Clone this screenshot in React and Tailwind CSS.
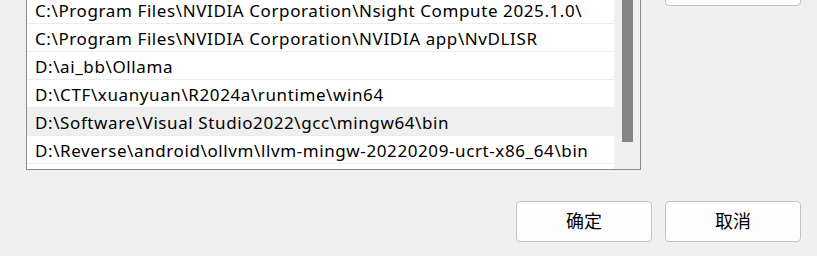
import React from 'react';

const paths = [
  'C:\\Program Files\\NVIDIA Corporation\\Nsight Compute 2025.1.0\\',
  'C:\\Program Files\\NVIDIA Corporation\\NVIDIA app\\NvDLISR',
  'D:\\ai_bb\\Ollama',
  'D:\\CTF\\xuanyuan\\R2024a\\runtime\\win64',
  'D:\\Software\\Visual Studio2022\\gcc\\mingw64\\bin',
  'D:\\Reverse\\android\\ollvm\\llvm-mingw-20220209-ucrt-x86_64\\bin',
];

const font = { fontFamily: '"Noto Sans", "Noto Sans CJK SC", sans-serif' };

export default function App() {
  return (
    <div
      className="w-[817px] h-[256px] bg-[#f0f0f0] overflow-hidden flex flex-col text-black"
      style={font}
    >
      {/* list + side buttons */}
      <div className="flex items-start pl-[26px] gap-[24px] -mt-[5px]">
        <div className="w-[615px] h-[175px] border border-[#8a8a8a] bg-white flex">
          <div className="w-[587px] flex flex-col">
            {paths.map((p, i) => (
              <div
                key={p}
                className={`h-[28px] shrink-0 border-b border-[#ececec] pl-[8px] pt-[2px] flex items-center text-[17px] tracking-[0.6px] leading-none whitespace-nowrap ${
                  i === 4 ? 'bg-[#efefef]' : ''
                }`}
              >
                {p}
              </div>
            ))}
          </div>
          <div className="w-[26px] bg-[#f0f0f0] pl-[8px]">
            <div className="w-[11px] h-[146px] bg-[#858585]" />
          </div>
        </div>
        <div className="-mt-[29px]">
          <button className="w-[136px] h-[40px] rounded-[4px] border border-[#c4c4c4] bg-[#fdfdfd]" />
        </div>
      </div>

      {/* dialog buttons */}
      <div className="flex justify-end gap-[13px] pr-[16px] mt-[31px]">
        <button className="w-[136px] h-[41px] rounded-[4px] border border-[#c4c4c4] bg-[#fdfdfd] text-[18px]">
          确定
        </button>
        <button className="w-[136px] h-[41px] rounded-[4px] border border-[#c4c4c4] bg-[#fdfdfd] text-[18px]">
          取消
        </button>
      </div>
    </div>
  );
}
